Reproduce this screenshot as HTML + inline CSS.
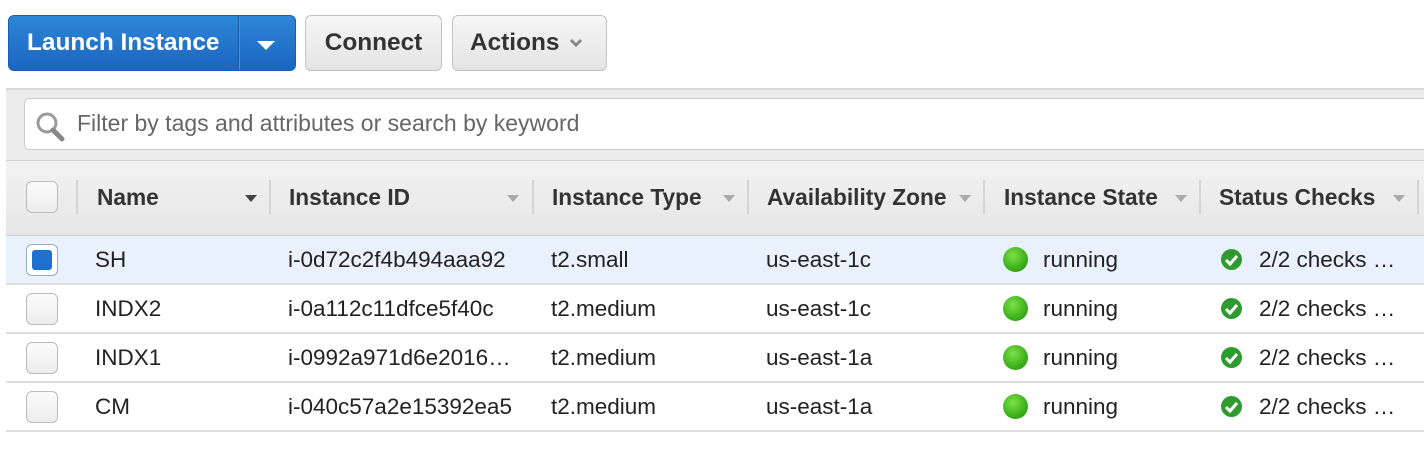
<!DOCTYPE html>
<html><head><style>
*{box-sizing:border-box;margin:0;padding:0}
body{width:1424px;height:462px;background:#fff;font-family:"Liberation Sans",Arial,sans-serif;position:relative;overflow:hidden;color:#222}
.btn{position:absolute;top:15px;height:56px;border-radius:6px;font-weight:bold;font-size:24.4px;display:flex;align-items:center}
.gray{background:linear-gradient(#f6f6f6,#e4e4e4);border:1px solid #c3c3c3;color:#333}
.launch{left:8px;width:288px;background:linear-gradient(#2f86d8,#1a66c0);border:1px solid #175fb0;color:#fff}
.panel{position:absolute;left:6px;top:88px;width:1418px;height:148px;background:#ececec;border-top:2px solid #d8d8d8}
.search{position:absolute;left:24px;top:98px;width:1410px;height:52px;background:#fff;border:1px solid #ccc;border-radius:5px}
.hdr{position:absolute;left:6px;top:160px;width:1418px;height:76px;background:linear-gradient(#f2f2f2,#e6e6e6);border-top:1px solid #d2d2d2;border-bottom:1px solid #cfcfcf}
.h{position:absolute;top:184px;font-weight:bold;font-size:22.7px;color:#333}
.sep{position:absolute;top:180px;width:2px;height:34px;background:#d4d4d4}
.arr{position:absolute;top:195px;width:0;height:0;border-left:6px solid transparent;border-right:6px solid transparent;border-top:7px solid #aaa}
.row{position:absolute;left:6px;width:1418px;height:49px;border-bottom:2px solid #ddd}
.c{position:absolute;font-size:22.5px;color:#222}
.cb{position:absolute;left:26px;width:32px;height:32px;border:1px solid #bbb;border-radius:6px;background:linear-gradient(#fbfbfb,#ececec)}
.dot{position:absolute;left:1003px;width:25px;height:25px;border-radius:50%;background:radial-gradient(circle at 40% 35%,#7de04a,#3cb01a 60%,#2a8a10)}
.chk{position:absolute;left:1221px;width:21px;height:21px;border-radius:50%;background:#2f9a2f}
</style></head><body>
<div class="btn launch"><span style="margin-left:18px">Launch Instance</span>
<div style="position:absolute;left:229px;top:0;bottom:0;width:2px;background:#1558a8;border-right:1px solid #4a94dc"></div>
<div style="position:absolute;left:248px;top:25px;border-left:9px solid transparent;border-right:9px solid transparent;border-top:9px solid #fff"></div></div>
<div class="btn gray" style="left:305px;width:137px;justify-content:center">Connect</div>
<div class="btn gray" style="left:452px;width:155px"><span style="margin-left:17px">Actions</span>
<svg style="position:absolute;left:116px;top:22px" width="14" height="10"><path d="M2 2l5 5 5-5" stroke="#888" stroke-width="3" fill="none"/></svg></div>
<div class="panel"></div>
<div class="search">
<svg style="position:absolute;left:10px;top:12px" width="34" height="32"><circle cx="12" cy="12" r="9" stroke="#999" stroke-width="3" fill="none"/><path d="M18 19l9 9" stroke="#888" stroke-width="5" stroke-linecap="round"/></svg>
<span style="position:absolute;left:52px;top:11px;font-size:23px;color:#666">Filter by tags and attributes or search by keyword</span></div>
<div class="hdr"></div>
<div class="cb" style="top:181px"></div>
<div class="sep" style="left:76px"></div>
<div class="h" style="left:97px">Name</div><div class="arr" style="left:245px;border-top-color:#444"></div>
<div class="sep" style="left:269px"></div>
<div class="h" style="left:289px">Instance ID</div><div class="arr" style="left:507px"></div>
<div class="sep" style="left:532px"></div>
<div class="h" style="left:552px">Instance Type</div><div class="arr" style="left:723px"></div>
<div class="sep" style="left:747px"></div>
<div class="h" style="left:767px">Availability Zone</div><div class="arr" style="left:959px"></div>
<div class="sep" style="left:983px"></div>
<div class="h" style="left:1004px">Instance State</div><div class="arr" style="left:1175px"></div>
<div class="sep" style="left:1199px"></div>
<div class="h" style="left:1219px">Status Checks</div><div class="arr" style="left:1393px"></div>
<div class="sep" style="left:1417px"></div>

<div class="row" style="top:236px;background:#e8f1fc"></div>
<div class="row" style="top:285px"></div>
<div class="row" style="top:334px"></div>
<div class="row" style="top:383px"></div>

<div class="cb" style="top:244px;background:#fff;border-color:#9ab"><div style="position:absolute;left:5px;top:5px;width:20px;height:20px;border-radius:3px;background:#1f6fd0"></div></div>
<div class="cb" style="top:293px"></div>
<div class="cb" style="top:342px"></div>
<div class="cb" style="top:391px"></div>

<div class="c" style="left:95px;top:247px">SH</div>
<div class="c" style="left:95px;top:296px">INDX2</div>
<div class="c" style="left:95px;top:345px">INDX1</div>
<div class="c" style="left:95px;top:394px">CM</div>
<div class="c" style="left:288px;top:247px">i-0d72c2f4b494aaa92</div>
<div class="c" style="left:288px;top:296px">i-0a112c11dfce5f40c</div>
<div class="c" style="left:288px;top:345px">i-0992a971d6e2016…</div>
<div class="c" style="left:288px;top:394px">i-040c57a2e15392ea5</div>
<div class="c" style="left:551px;top:247px">t2.small</div>
<div class="c" style="left:551px;top:296px">t2.medium</div>
<div class="c" style="left:551px;top:345px">t2.medium</div>
<div class="c" style="left:551px;top:394px">t2.medium</div>
<div class="c" style="left:766px;top:247px">us-east-1c</div>
<div class="c" style="left:766px;top:296px">us-east-1c</div>
<div class="c" style="left:766px;top:345px">us-east-1a</div>
<div class="c" style="left:766px;top:394px">us-east-1a</div>
<div class="dot" style="top:247px"></div><div class="dot" style="top:296px"></div><div class="dot" style="top:345px"></div><div class="dot" style="top:394px"></div>
<div class="c" style="left:1043px;top:247px">running</div>
<div class="c" style="left:1043px;top:296px">running</div>
<div class="c" style="left:1043px;top:345px">running</div>
<div class="c" style="left:1043px;top:394px">running</div>
<div class="chk" style="top:249px"><svg width="21" height="21"><path d="M5 11l4 4 7-8" stroke="#fff" stroke-width="3" fill="none"/></svg></div>
<div class="chk" style="top:298px"><svg width="21" height="21"><path d="M5 11l4 4 7-8" stroke="#fff" stroke-width="3" fill="none"/></svg></div>
<div class="chk" style="top:347px"><svg width="21" height="21"><path d="M5 11l4 4 7-8" stroke="#fff" stroke-width="3" fill="none"/></svg></div>
<div class="chk" style="top:396px"><svg width="21" height="21"><path d="M5 11l4 4 7-8" stroke="#fff" stroke-width="3" fill="none"/></svg></div>
<div class="c" style="left:1259px;top:247px">2/2 checks …</div>
<div class="c" style="left:1259px;top:296px">2/2 checks …</div>
<div class="c" style="left:1259px;top:345px">2/2 checks …</div>
<div class="c" style="left:1259px;top:394px">2/2 checks …</div>
</body></html>
